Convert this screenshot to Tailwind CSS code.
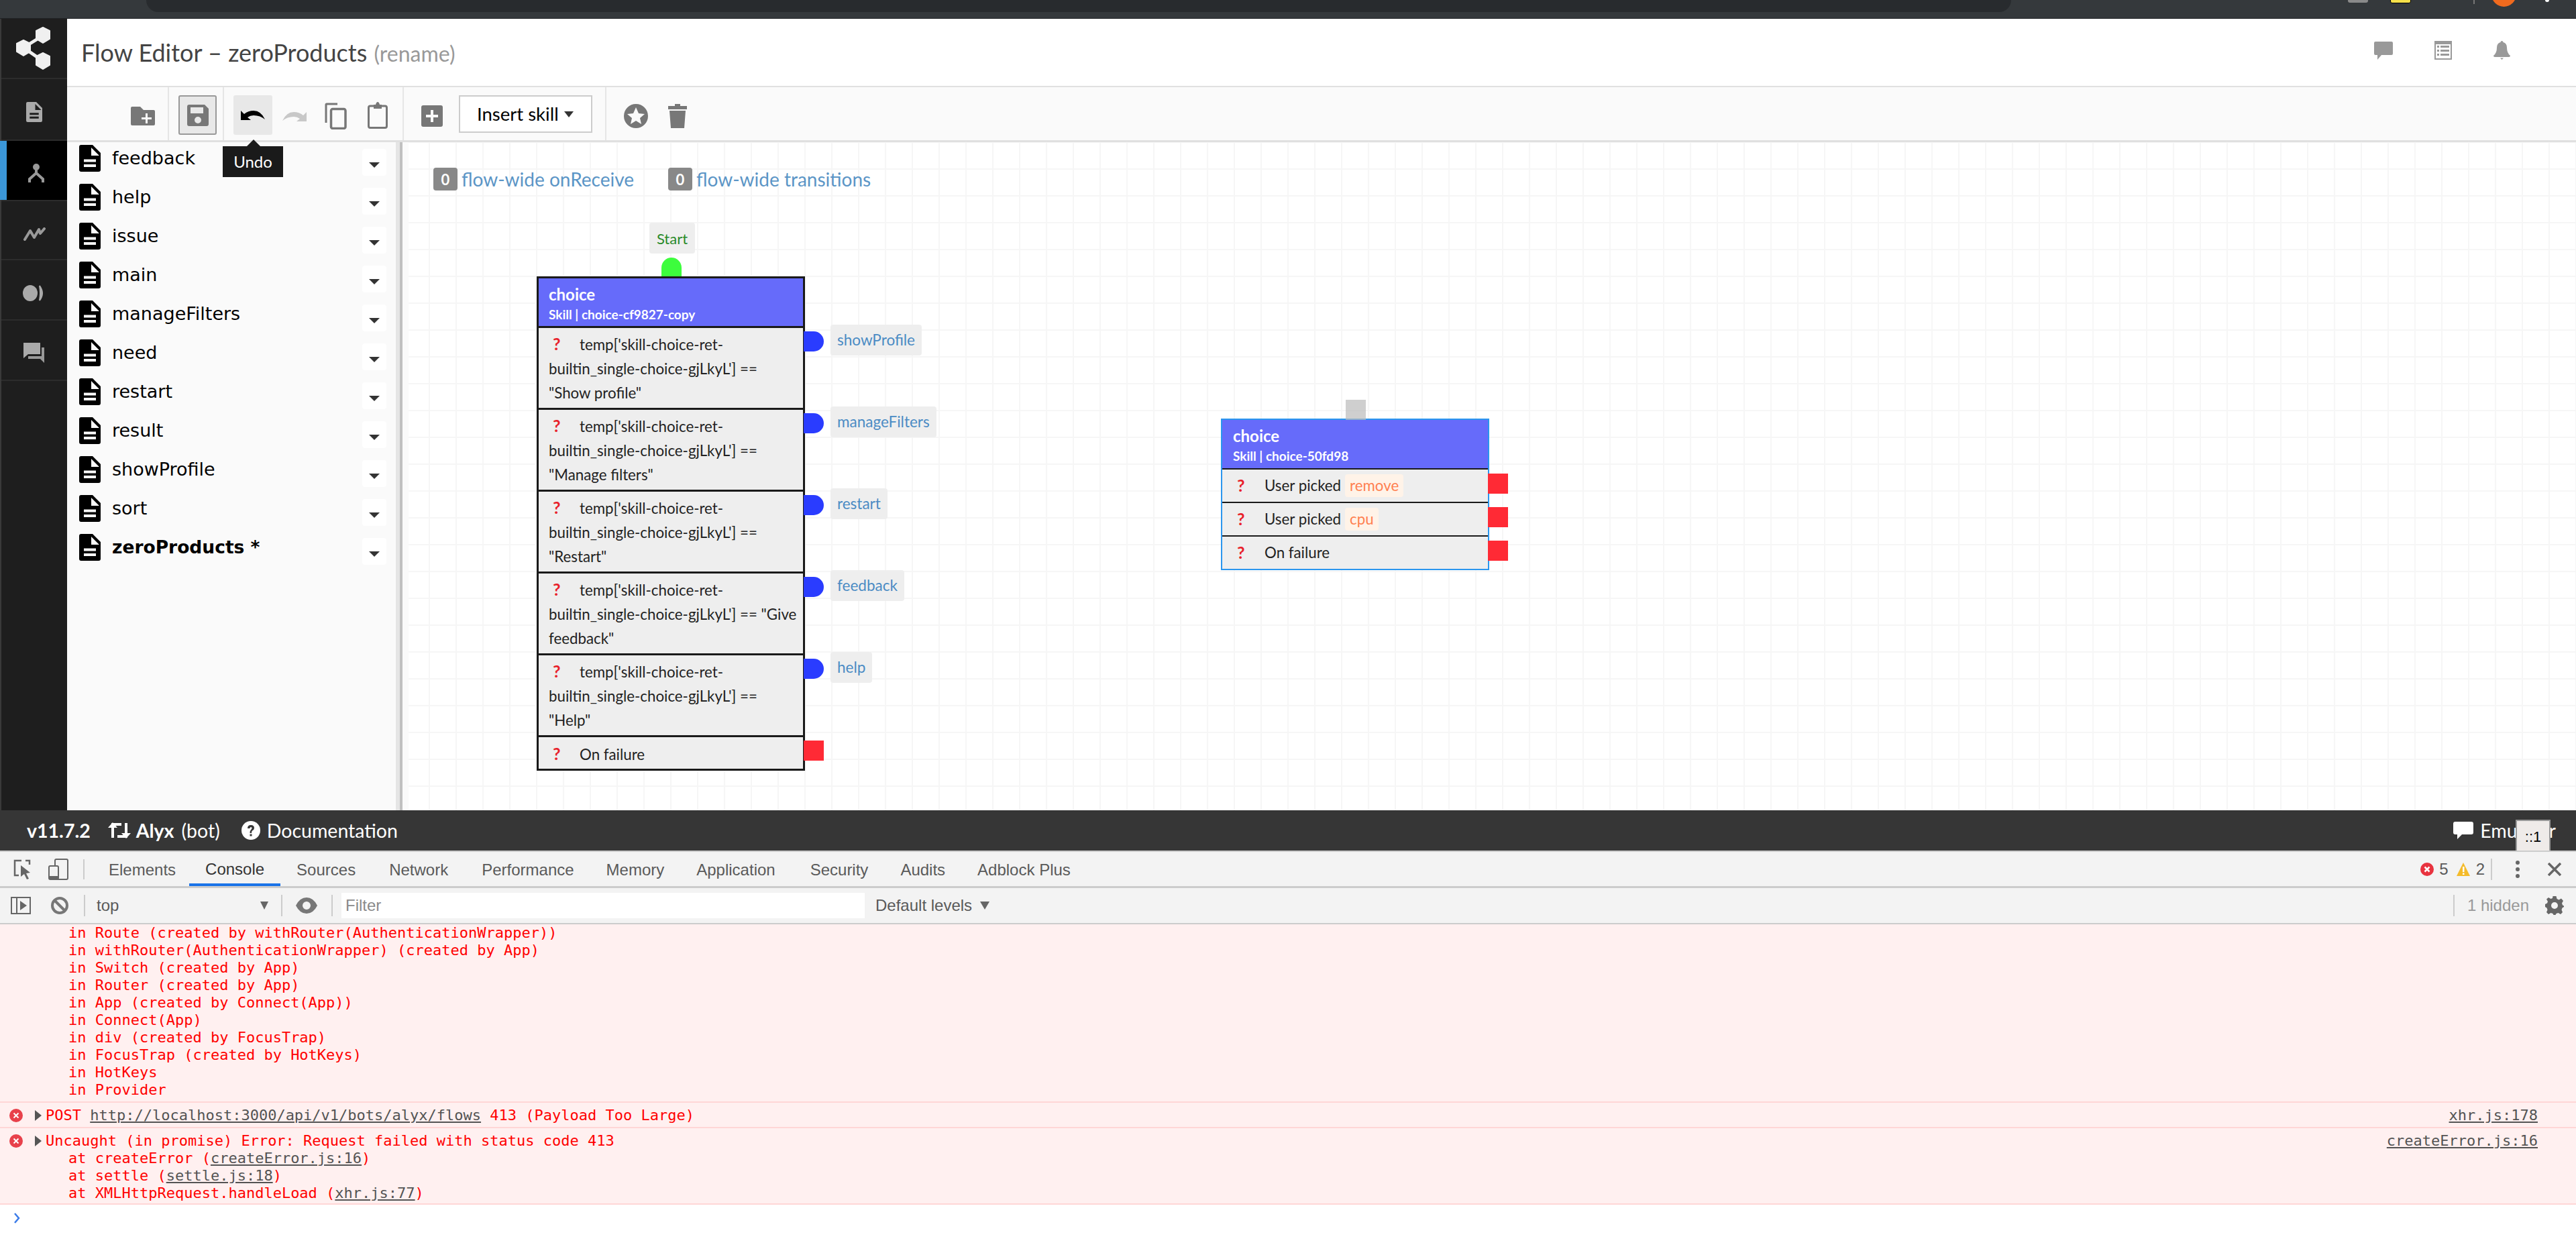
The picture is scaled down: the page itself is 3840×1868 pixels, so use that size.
<!DOCTYPE html>
<html lang="en">
<head>
    <meta charset="UTF-8">
    <title>Flow Editor - zeroProducts</title>
    <script src="https://cdn.jsdelivr.net/npm/@tailwindcss/browser@4"></script>
</head>
<body class="w-[3840px] h-[1868px] overflow-hidden bg-white font-['Lato',sans-serif] relative">
    <!-- Browser chrome, cut off by the capture -->
    <div class="h-[28px] bg-[#35393c] border-b border-[#202225] relative overflow-hidden">
        <div class="absolute left-[218px] top-[-20px] w-[2780px] h-[38px] bg-[#282b2e] rounded-[18px]"></div>
        <div class="absolute left-[3500px] top-[-8px] w-[30px] h-[12px] bg-[#8a8a8a] rounded-[3px]"></div>
        <div class="absolute left-[3563px] top-[-8px] w-[31px] h-[13px] bg-[#f5e04a] border border-black rounded-[3px]"></div>
        <div class="absolute left-[3687px] top-0 w-[2px] h-[6px] bg-[#777]"></div>
        <div class="absolute left-[3714px] top-[-27px] w-[37px] h-[37px] bg-[#f06a1e] rounded-full"></div>
        <div class="absolute left-[3794px] top-[-3px] w-[6px] h-[6px] bg-white rounded-full"></div>
    </div>

    <div class="flex h-[1180px]">
        <!-- Left nav -->
        <div class="w-[100px] shrink-0 bg-[#1e1e1e] border-l-[2px] border-[#3a3a3a] flex flex-col">
            <div class="h-[90px] border-b-[2px] border-[#2c2c2c] flex items-center justify-center">
                <svg width="60" height="66" viewBox="0 0 60 66" class="-ml-[2px]">
                    <g fill="#f0f0f0" stroke="#f0f0f0" stroke-linejoin="round" stroke-width="2">
                        <polygon points="44,2 54,7 54,19 44,25 34,19 34,7"/>
                        <polygon points="15,21 25,26 25,38 15,44 5,38 5,26"/>
                        <polygon points="44,40 54,45 54,58 44,64 34,58 34,45"/>
                    </g>
                    <path d="M15 32 L44 14 M15 32 L44 52" stroke="#f0f0f0" stroke-width="5"/>
                </svg>
            </div>
            <div class="h-[92px] border-b-[2px] border-[#2c2c2c] flex items-center justify-center pt-[8px]">
                <svg width="24" height="30" viewBox="0 0 32 40"><path fill="#aaa" fill-rule="evenodd" d="M3 0H20L32 12V37Q32 40 29 40H3Q0 40 0 37V3Q0 0 3 0ZM18 4V16H30ZM7 21.5V25.5H25V21.5ZM7 29V33H25V29Z"/></svg>
            </div>
            <div class="h-[88px] -ml-[2px] bg-black border-l-[10px] border-[#3b97d9] flex items-center justify-center pt-[8px]">
                <svg width="28" height="28" viewBox="0 0 28 28" class="-ml-[2px]">
                    <circle cx="14" cy="5" r="5" fill="#999"/>
                    <path d="M14 8 V14 M14 14 L4 23 V28 M14 14 L24 23 V28" stroke="#999" stroke-width="4" fill="none"/>
                </svg>
            </div>
            <div class="h-[90px] border-y-[2px] border-[#2c2c2c] flex items-center justify-center pt-[12px]">
                <svg width="34" height="20" viewBox="0 0 34 20"><path d="M3 18 L11 5 L17 15 L24 3 L26 9 L32 2" stroke="#999" stroke-width="4" fill="none" stroke-linecap="round" stroke-linejoin="round"/></svg>
            </div>
            <div class="h-[90px] border-b-[2px] border-[#2c2c2c] flex items-center justify-center pt-[10px]">
                <svg width="34" height="24" viewBox="0 0 34 24"><ellipse cx="11" cy="12" rx="11" ry="12" fill="#aaa"/><path d="M25 1 Q33 12 25 23 Q27 12 25 1Z" fill="#aaa" stroke="#aaa" stroke-width="2"/></svg>
            </div>
            <div class="h-[90px] border-b-[2px] border-[#2c2c2c] flex items-center justify-center pt-[8px]">
                <svg width="32" height="30" viewBox="0 0 32 30"><path fill="#aaa" d="M0 0H25V17H7L0 23Z"/><path fill="#999" d="M27 7H31V30L25 24H7V20H27Z"/></svg>
            </div>
        </div>

        <!-- Editor column -->
        <div class="flex-1 flex flex-col min-w-0">
            <div class="h-[102px] bg-white border-b-[2px] border-[#e0e0e0] flex items-center pl-[21px] pr-[98px] shrink-0">
                <h1 class="text-[36px] text-[#444] font-normal whitespace-nowrap">Flow Editor – zeroProducts <span class="text-[32px] text-[#999] ml-[1px]">(rename)</span></h1>
                <div class="ml-auto flex items-center gap-[62px] -mt-[6px]">
                    <svg width="28" height="27" viewBox="0 0 28 27"><path fill="#999" d="M2 0H26Q28 0 28 2V18Q28 20 26 20H11L5 27V20H2Q0 20 0 18V2Q0 0 2 0Z"/></svg>
                    <svg width="26" height="28" viewBox="0 0 26 28"><path fill="#999" fill-rule="evenodd" d="M0 0H26V28H0ZM2 5V26H24V5Z"/><path fill="#999" d="M4 7H7V10H4ZM9 7H22V10H9ZM4 13H7V16H4ZM9 13H22V16H9ZM4 19H7V22H4ZM9 19H22V22H9Z"/></svg>
                    <svg width="25" height="28" viewBox="0 0 25 28"><path fill="#999" d="M12.5 0Q14.5 0 14.5 2Q20 3.500 20 10Q20 18 25 22Q25 24 22 24H3Q0 24 0 22Q5 18 5 10Q5 3.500 10.500 2Q10.500 0 12.500 0ZM10 25.500H15L12.500 28Z"/></svg>
                </div>
            </div>

            <!-- Toolbar -->
            <div class="h-[82px] bg-[#fafafa] border-b-[3px] border-[#e0e0e0] flex shrink-0">
                <div class="w-[152px] border-r-[2px] border-[#e6e6e6] flex items-end pl-[95px] pb-[22px]">
                    <svg width="36" height="28" viewBox="0 0 36 28"><path fill="#777" fill-rule="evenodd" d="M2 0H14L19 5H34Q36 5 36 7V26Q36 28 34 28H2Q0 28 0 26V2Q0 0 2 0ZM22 10V16H16V19H22V25H25V19H31V16H25V10Z"/></svg>
                </div>
                <div class="w-[82px] border-r-[2px] border-[#e6e6e6] flex items-start pl-[14px] pt-[12px]">
                    <div class="w-[57px] h-[59px] bg-[#e8e8e8] border-[2px] border-[#999] rounded-[3px] flex items-center justify-center">
                        <svg width="32" height="32" viewBox="0 0 32 32"><path fill="#777" fill-rule="evenodd" d="M3 0H26L32 6V29Q32 32 29 32H3Q0 32 0 29V3Q0 0 3 0ZM5 4V13H24V4ZM16 18A5 5 0 1 0 16 28A5 5 0 1 0 16 18Z"/></svg>
                    </div>
                </div>
                <div class="w-[268px] border-r-[2px] border-[#e6e6e6] flex items-start pl-[14px] pt-[12px]">
                    <div class="w-[58px] h-[59px] bg-[#e8e8e8] rounded-[3px] flex items-center justify-center">
                        <svg width="36" height="17" viewBox="0 0 36 17"><path d="M0 16V2L5 7Q11 2 19 2Q30 2 36 15Q29 9 19 9Q14 9 10 12L15 16Z" fill="#000"/></svg>
                    </div>
                    <svg width="36" height="17" viewBox="0 0 36 17" class="ml-[15px] mt-[23px]"><path d="M36 16V2L31 7Q25 2 17 2Q6 2 0 15Q7 9 17 9Q22 9 26 12L21 16Z" fill="#c8c8c8"/></svg>
                    <svg width="33" height="40" viewBox="0 0 33 40" class="ml-[27px] mt-[11px]"><path d="M19 2H3Q2 2 2 3V30" stroke="#777" stroke-width="3" fill="none"/><rect x="9.500" y="9.500" width="21.500" height="29" rx="2.500" stroke="#777" stroke-width="3.500" fill="none"/></svg>
                    <svg width="30" height="40" viewBox="0 0 30 40" class="ml-[31px] mt-[10px]"><rect x="1.500" y="6" width="27" height="32.500" rx="2.500" stroke="#777" stroke-width="3" fill="none"/><path fill="#777" d="M9 4H12Q13 0 15 0Q17 0 18 4H21V10H9Z"/></svg>
                </div>
                <div class="w-[302px] border-r-[2px] border-[#e6e6e6] flex items-start pl-[26px] pt-[12px]">
                    <svg width="32" height="32" viewBox="0 0 32 32" class="mt-[15px]"><path fill="#777" fill-rule="evenodd" d="M3 0H29Q32 0 32 3V29Q32 32 29 32H3Q0 32 0 29V3Q0 0 3 0ZM14 7V14H7V18H14V25H18V18H25V14H18V7Z"/></svg>
                    <button class="ml-[24px] w-[199px] h-[56px] bg-white border-[2px] border-[#ccc] text-[27.5px] text-black flex items-center pl-[25px] whitespace-nowrap">
                        Insert skill
                        <span class="ml-[8px] mt-[1px] border-x-[7.500px] border-x-transparent border-t-[9px] border-t-[#333]"></span>
                    </button>
                </div>
                <div class="flex items-start pl-[26px] pt-[25px]">
                    <svg width="36" height="36" viewBox="0 0 36 36"><path fill="#777" fill-rule="evenodd" d="M18 0A18 18 0 1 0 18 36A18 18 0 1 0 18 0ZM18 5L22 14L31 15L24 21L26 30L18 25L10 30L12 21L5 15L14 14Z"/></svg>
                    <svg width="28" height="36" viewBox="0 0 28 36" class="ml-[30px]"><path fill="#777" d="M10 0H18V3H28V8H0V3H10ZM2 10H26L24 36H4Z"/></svg>
                </div>
            </div>

            <div class="flex flex-1 min-h-0 relative">
                <!-- Flow list -->
                <div class="w-[490px] shrink-0 bg-[#fafafa] pl-[18px] pr-[14px] pt-[4px]">
                    <div class="h-[58px] flex items-start relative"><svg width="32" height="40" viewBox="0 0 32 40"><path fill="#000" fill-rule="evenodd" d="M3 0H20L32 12V37Q32 40 29 40H3Q0 40 0 37V3Q0 0 3 0ZM18 4V16H30ZM7 21.500V25.500H25V21.500ZM7 29V33H25V29Z"/></svg><span class="ml-[17px] font-['DejaVu_Sans',sans-serif] text-[27px] leading-[40px] text-black">feedback</span><span class="ml-auto mt-[6px] w-[36px] h-[40px] bg-white rounded-[4px] flex items-center justify-center pt-[8px]"><span class="border-x-[8px] border-x-transparent border-t-[8px] border-t-[#333]"></span></span></div>
                    <div class="h-[58px] flex items-start relative"><svg width="32" height="40" viewBox="0 0 32 40"><path fill="#000" fill-rule="evenodd" d="M3 0H20L32 12V37Q32 40 29 40H3Q0 40 0 37V3Q0 0 3 0ZM18 4V16H30ZM7 21.500V25.500H25V21.500ZM7 29V33H25V29Z"/></svg><span class="ml-[17px] font-['DejaVu_Sans',sans-serif] text-[27px] leading-[40px] text-black">help</span><span class="ml-auto mt-[6px] w-[36px] h-[40px] bg-white rounded-[4px] flex items-center justify-center pt-[8px]"><span class="border-x-[8px] border-x-transparent border-t-[8px] border-t-[#333]"></span></span></div>
                    <div class="h-[58px] flex items-start relative"><svg width="32" height="40" viewBox="0 0 32 40"><path fill="#000" fill-rule="evenodd" d="M3 0H20L32 12V37Q32 40 29 40H3Q0 40 0 37V3Q0 0 3 0ZM18 4V16H30ZM7 21.500V25.500H25V21.500ZM7 29V33H25V29Z"/></svg><span class="ml-[17px] font-['DejaVu_Sans',sans-serif] text-[27px] leading-[40px] text-black">issue</span><span class="ml-auto mt-[6px] w-[36px] h-[40px] bg-white rounded-[4px] flex items-center justify-center pt-[8px]"><span class="border-x-[8px] border-x-transparent border-t-[8px] border-t-[#333]"></span></span></div>
                    <div class="h-[58px] flex items-start relative"><svg width="32" height="40" viewBox="0 0 32 40"><path fill="#000" fill-rule="evenodd" d="M3 0H20L32 12V37Q32 40 29 40H3Q0 40 0 37V3Q0 0 3 0ZM18 4V16H30ZM7 21.500V25.500H25V21.500ZM7 29V33H25V29Z"/></svg><span class="ml-[17px] font-['DejaVu_Sans',sans-serif] text-[27px] leading-[40px] text-black">main</span><span class="ml-auto mt-[6px] w-[36px] h-[40px] bg-white rounded-[4px] flex items-center justify-center pt-[8px]"><span class="border-x-[8px] border-x-transparent border-t-[8px] border-t-[#333]"></span></span></div>
                    <div class="h-[58px] flex items-start relative"><svg width="32" height="40" viewBox="0 0 32 40"><path fill="#000" fill-rule="evenodd" d="M3 0H20L32 12V37Q32 40 29 40H3Q0 40 0 37V3Q0 0 3 0ZM18 4V16H30ZM7 21.500V25.500H25V21.500ZM7 29V33H25V29Z"/></svg><span class="ml-[17px] font-['DejaVu_Sans',sans-serif] text-[27px] leading-[40px] text-black">manageFilters</span><span class="ml-auto mt-[6px] w-[36px] h-[40px] bg-white rounded-[4px] flex items-center justify-center pt-[8px]"><span class="border-x-[8px] border-x-transparent border-t-[8px] border-t-[#333]"></span></span></div>
                    <div class="h-[58px] flex items-start relative"><svg width="32" height="40" viewBox="0 0 32 40"><path fill="#000" fill-rule="evenodd" d="M3 0H20L32 12V37Q32 40 29 40H3Q0 40 0 37V3Q0 0 3 0ZM18 4V16H30ZM7 21.500V25.500H25V21.500ZM7 29V33H25V29Z"/></svg><span class="ml-[17px] font-['DejaVu_Sans',sans-serif] text-[27px] leading-[40px] text-black">need</span><span class="ml-auto mt-[6px] w-[36px] h-[40px] bg-white rounded-[4px] flex items-center justify-center pt-[8px]"><span class="border-x-[8px] border-x-transparent border-t-[8px] border-t-[#333]"></span></span></div>
                    <div class="h-[58px] flex items-start relative"><svg width="32" height="40" viewBox="0 0 32 40"><path fill="#000" fill-rule="evenodd" d="M3 0H20L32 12V37Q32 40 29 40H3Q0 40 0 37V3Q0 0 3 0ZM18 4V16H30ZM7 21.500V25.500H25V21.500ZM7 29V33H25V29Z"/></svg><span class="ml-[17px] font-['DejaVu_Sans',sans-serif] text-[27px] leading-[40px] text-black">restart</span><span class="ml-auto mt-[6px] w-[36px] h-[40px] bg-white rounded-[4px] flex items-center justify-center pt-[8px]"><span class="border-x-[8px] border-x-transparent border-t-[8px] border-t-[#333]"></span></span></div>
                    <div class="h-[58px] flex items-start relative"><svg width="32" height="40" viewBox="0 0 32 40"><path fill="#000" fill-rule="evenodd" d="M3 0H20L32 12V37Q32 40 29 40H3Q0 40 0 37V3Q0 0 3 0ZM18 4V16H30ZM7 21.500V25.500H25V21.500ZM7 29V33H25V29Z"/></svg><span class="ml-[17px] font-['DejaVu_Sans',sans-serif] text-[27px] leading-[40px] text-black">result</span><span class="ml-auto mt-[6px] w-[36px] h-[40px] bg-white rounded-[4px] flex items-center justify-center pt-[8px]"><span class="border-x-[8px] border-x-transparent border-t-[8px] border-t-[#333]"></span></span></div>
                    <div class="h-[58px] flex items-start relative"><svg width="32" height="40" viewBox="0 0 32 40"><path fill="#000" fill-rule="evenodd" d="M3 0H20L32 12V37Q32 40 29 40H3Q0 40 0 37V3Q0 0 3 0ZM18 4V16H30ZM7 21.500V25.500H25V21.500ZM7 29V33H25V29Z"/></svg><span class="ml-[17px] font-['DejaVu_Sans',sans-serif] text-[27px] leading-[40px] text-black">showProfile</span><span class="ml-auto mt-[6px] w-[36px] h-[40px] bg-white rounded-[4px] flex items-center justify-center pt-[8px]"><span class="border-x-[8px] border-x-transparent border-t-[8px] border-t-[#333]"></span></span></div>
                    <div class="h-[58px] flex items-start relative"><svg width="32" height="40" viewBox="0 0 32 40"><path fill="#000" fill-rule="evenodd" d="M3 0H20L32 12V37Q32 40 29 40H3Q0 40 0 37V3Q0 0 3 0ZM18 4V16H30ZM7 21.500V25.500H25V21.500ZM7 29V33H25V29Z"/></svg><span class="ml-[17px] font-['DejaVu_Sans',sans-serif] text-[27px] leading-[40px] text-black">sort</span><span class="ml-auto mt-[6px] w-[36px] h-[40px] bg-white rounded-[4px] flex items-center justify-center pt-[8px]"><span class="border-x-[8px] border-x-transparent border-t-[8px] border-t-[#333]"></span></span></div>
                    <div class="h-[58px] flex items-start relative"><svg width="32" height="40" viewBox="0 0 32 40"><path fill="#000" fill-rule="evenodd" d="M3 0H20L32 12V37Q32 40 29 40H3Q0 40 0 37V3Q0 0 3 0ZM18 4V16H30ZM7 21.500V25.500H25V21.500ZM7 29V33H25V29Z"/></svg><span class="ml-[17px] font-['DejaVu_Sans',sans-serif] font-bold text-[26.5px] leading-[40px] text-black">zeroProducts *</span><span class="ml-auto mt-[6px] w-[36px] h-[40px] bg-white rounded-[4px] flex items-center justify-center pt-[8px]"><span class="border-x-[8px] border-x-transparent border-t-[8px] border-t-[#333]"></span></span></div>
                </div>
                <!-- Splitter -->
                <div class="w-[6px] shrink-0 bg-[#e5e5e5]"></div>
                <div class="w-[4px] shrink-0 bg-[#c0c0c0]"></div>
                <div class="w-[9px] shrink-0 bg-[#fafafa]"></div>

                <!-- Canvas: node positions are the content here -->
                <div class="flex-1 relative bg-white overflow-hidden bg-[linear-gradient(#f6f6f6_2px,transparent_2px),linear-gradient(90deg,#f6f6f6_2px,transparent_2px)] bg-[size:40px_40px] bg-[position:30px_39px]">
                    <div class="absolute left-[37px] top-[34px] flex items-center text-[28px] text-[#5b95c6] whitespace-nowrap">
                        <span class="w-[36px] h-[34px] bg-[#888] rounded-[4px] text-white text-[22px] font-bold flex items-center justify-center mr-[6px]">0</span>flow-wide onReceive
                    </div>
                    <div class="absolute left-[387px] top-[34px] flex items-center text-[28px] text-[#5b95c6] whitespace-nowrap">
                        <span class="w-[36px] h-[34px] bg-[#888] rounded-[4px] text-white text-[22px] font-bold flex items-center justify-center mr-[6px]">0</span>flow-wide transitions
                    </div>

                    <div class="absolute left-[359px] top-[120px] w-[68px] h-[46px] bg-[#eeeeee] rounded-[4px] text-[22px] text-[#2a8a2a] flex items-center justify-center">Start</div>
                    <div class="absolute left-[377px] top-[172px] w-[30px] h-[30px] bg-[#3dfd3d] rounded-t-[15px]"></div>

                    <!-- choice-cf9827-copy -->
                    <div class="absolute left-[191px] top-[200px] w-[400px] border-[3px] border-[#1a1a1a] text-[22.3px] text-[#222]">
                        <div class="h-[74px] bg-[#666bfa] text-white font-bold px-[15px] pt-[7px] border-b-[3px] border-[#1a1a1a]">
                            <div class="text-[24px] leading-[34px]">choice</div>
                            <div class="text-[19px] leading-[26px]">Skill | choice-cf9827-copy</div>
                        </div>
                        <div class="h-[122px] bg-[#eeeeee] border-b-[3px] border-[#1a1a1a] pl-[15px] pr-[8px] pt-[5px] leading-[36px]"><span class="inline-block w-[46px] pl-[6px] text-[#e8202a] font-bold text-[25px]">?</span>temp['skill-choice-ret-builtin_single-choice-gjLkyL'] == "Show profile"</div>
                        <div class="h-[122px] bg-[#eeeeee] border-b-[3px] border-[#1a1a1a] pl-[15px] pr-[8px] pt-[5px] leading-[36px]"><span class="inline-block w-[46px] pl-[6px] text-[#e8202a] font-bold text-[25px]">?</span>temp['skill-choice-ret-builtin_single-choice-gjLkyL'] == "Manage filters"</div>
                        <div class="h-[122px] bg-[#eeeeee] border-b-[3px] border-[#1a1a1a] pl-[15px] pr-[8px] pt-[5px] leading-[36px]"><span class="inline-block w-[46px] pl-[6px] text-[#e8202a] font-bold text-[25px]">?</span>temp['skill-choice-ret-builtin_single-choice-gjLkyL'] == "Restart"</div>
                        <div class="h-[122px] bg-[#eeeeee] border-b-[3px] border-[#1a1a1a] pl-[15px] pr-[8px] pt-[5px] leading-[36px]"><span class="inline-block w-[46px] pl-[6px] text-[#e8202a] font-bold text-[25px]">?</span>temp['skill-choice-ret-builtin_single-choice-gjLkyL'] == "Give feedback"</div>
                        <div class="h-[122px] bg-[#eeeeee] border-b-[3px] border-[#1a1a1a] pl-[15px] pr-[8px] pt-[5px] leading-[36px]"><span class="inline-block w-[46px] pl-[6px] text-[#e8202a] font-bold text-[25px]">?</span>temp['skill-choice-ret-builtin_single-choice-gjLkyL'] == "Help"</div>
                        <div class="h-[47px] bg-[#eeeeee] pl-[15px] pt-[6px] leading-[36px]"><span class="inline-block w-[46px] pl-[6px] text-[#e8202a] font-bold text-[25px]">?</span>On failure</div>
                    </div>
                    <div class="absolute left-[589px] top-[282px] w-[30px] h-[30px] bg-[#2a3cff] rounded-r-[15px]"></div>
                    <div class="absolute left-[589px] top-[404px] w-[30px] h-[30px] bg-[#2a3cff] rounded-r-[15px]"></div>
                    <div class="absolute left-[589px] top-[526px] w-[30px] h-[30px] bg-[#2a3cff] rounded-r-[15px]"></div>
                    <div class="absolute left-[589px] top-[648px] w-[30px] h-[30px] bg-[#2a3cff] rounded-r-[15px]"></div>
                    <div class="absolute left-[589px] top-[770px] w-[30px] h-[30px] bg-[#2a3cff] rounded-r-[15px]"></div>
                    <div class="absolute left-[589px] top-[892px] w-[30px] h-[30px] bg-[#ff2a35]"></div>
                    <div class="absolute left-[629px] top-[272px] h-[46px] px-[10px] bg-[#eeeeee] rounded-[4px] text-[22.5px] text-[#4a8bc4] flex items-center">showProfile</div>
                    <div class="absolute left-[629px] top-[394px] h-[46px] px-[10px] bg-[#eeeeee] rounded-[4px] text-[22.5px] text-[#4a8bc4] flex items-center">manageFilters</div>
                    <div class="absolute left-[629px] top-[516px] h-[46px] px-[10px] bg-[#eeeeee] rounded-[4px] text-[22.5px] text-[#4a8bc4] flex items-center">restart</div>
                    <div class="absolute left-[629px] top-[638px] h-[46px] px-[10px] bg-[#eeeeee] rounded-[4px] text-[22.5px] text-[#4a8bc4] flex items-center">feedback</div>
                    <div class="absolute left-[629px] top-[760px] h-[46px] px-[10px] bg-[#eeeeee] rounded-[4px] text-[22.5px] text-[#4a8bc4] flex items-center">help</div>

                    <!-- choice-50fd98 -->
                    <div class="absolute left-[1211px] top-[412px] w-[400px] border-[2px] border-[#2a96ee] text-[22.3px] text-[#222]">
                        <div class="h-[74px] bg-[#666bfa] text-white font-bold px-[16px] pt-[7px] border-b-[2px] border-[#1a1a1a]">
                            <div class="text-[24px] leading-[34px]">choice</div>
                            <div class="text-[19px] leading-[26px]">Skill | choice-50fd98</div>
                        </div>
                        <div class="h-[50px] bg-[#eeeeee] border-b-[2px] border-[#1a1a1a] pl-[16px] flex items-center"><span class="w-[47px] pl-[6px] text-[#e8202a] font-bold text-[25px]">?</span>User picked<span class="ml-[6px] px-[7px] h-[34px] bg-[#fff3e8] rounded-[4px] text-[#ff8050] flex items-center">remove</span></div>
                        <div class="h-[50px] bg-[#eeeeee] border-b-[2px] border-[#1a1a1a] pl-[16px] flex items-center"><span class="w-[47px] pl-[6px] text-[#e8202a] font-bold text-[25px]">?</span>User picked<span class="ml-[6px] px-[7px] h-[34px] bg-[#fff3e8] rounded-[4px] text-[#ff8050] flex items-center">cpu</span></div>
                        <div class="h-[48px] bg-[#eeeeee] pl-[16px] flex items-center"><span class="w-[47px] pl-[6px] text-[#e8202a] font-bold text-[25px]">?</span>On failure</div>
                    </div>
                    <div class="absolute left-[1397px] top-[384px] w-[30px] h-[30px] bg-[#bbb]/70"></div>
                    <div class="absolute left-[1609px] top-[494px] w-[30px] h-[30px] bg-[#ff2a35]"></div>
                    <div class="absolute left-[1609px] top-[544px] w-[30px] h-[30px] bg-[#ff2a35]"></div>
                    <div class="absolute left-[1609px] top-[594px] w-[30px] h-[30px] bg-[#ff2a35]"></div>
                </div>

                <!-- Undo tooltip -->
                <div class="absolute left-[232px] top-[6px] w-[90px] h-[46px] bg-[#1a1a1a] text-white text-[24px] flex items-center justify-center">
                    Undo
                    <span class="absolute left-[36px] -top-[10px] border-x-[10px] border-x-transparent border-b-[10px] border-b-[#1a1a1a]"></span>
                </div>
            </div>
        </div>
    </div>

    <!-- App footer -->
    <div class="h-[60px] bg-[#363636] text-white text-[28.5px] flex items-center pl-[40px] pr-[30px] relative">
        <span class="font-bold">v11.7.2</span>
        <svg width="34" height="26" viewBox="0 0 34 26" class="ml-[26px]"><path d="M7 24V4H20M27 2V22H14" stroke="#fff" stroke-width="4" fill="none"/><path d="M0 9L7 1L14 9ZM20 17L27 25L34 17Z" fill="#fff"/></svg>
        <span class="ml-[8px] font-bold">Alyx</span>
        <span class="ml-[11px]">(bot)</span>
        <svg width="28" height="28" viewBox="0 0 28 28" class="ml-[32px]"><circle cx="14" cy="14" r="14" fill="#fff"/><path d="M9 11Q9 6 14 6Q19 6 19 10.500Q19 13 16 14.500Q15 15 15 18H12.500Q12.500 14 14.500 12.500Q15.500 11.500 15.500 10.500Q15.500 9 14 9Q12.500 9 12.500 11Z" fill="#363636"/><rect x="12.500" y="19.500" width="3" height="3" fill="#363636"/></svg>
        <span class="ml-[10px]">Documentation</span>
        <svg width="30" height="26" viewBox="0 0 30 26" class="ml-auto"><path fill="#fff" d="M3 0H27Q30 0 30 3V16Q30 19 27 19H13L6 26V19H3Q0 19 0 16V3Q0 0 3 0Z"/></svg>
        <span class="ml-[10px]">Emulator</span>
        <div class="absolute left-[3750px] top-[14px] w-[52px] h-[46px] bg-[#efebe9] border-x-[2px] border-t-[2px] border-[#999] text-black text-[22px] font-['Liberation_Sans',sans-serif] flex items-center justify-center pt-[2px]">::1</div>
    </div>

    <!-- Devtools -->
    <div class="h-[56px] bg-[#f3f3f3] border-t-[2px] border-b-[3px] border-[#ccc] flex items-center font-['Liberation_Sans',sans-serif] text-[24px] text-[#5a5a5a] relative">
        <svg width="26" height="30" viewBox="0 0 26 30" class="ml-[20px]"><path d="M12 2H2V24H8M18 2H24V8" stroke="#666" stroke-width="2.500" fill="none"/><path fill="#666" d="M11 9L25 20L19 21L23 29L20 30L16 22L11 26Z"/></svg>
        <svg width="30" height="32" viewBox="0 0 30 32" class="ml-[26px]"><rect x="10" y="1" width="19" height="30" rx="2" stroke="#666" stroke-width="2" fill="none"/><rect x="1" y="11" width="14" height="20" rx="2" stroke="#666" stroke-width="2" fill="#f3f3f3"/><rect x="2" y="26" width="12" height="4" fill="#666"/></svg>
        <span class="ml-[22px] w-[2px] h-[30px] bg-[#ccc]"></span>
        <div class="flex h-full ml-[12px]">
            <span class="pl-[24px] pr-[20px] pt-[3px] flex items-center">Elements</span>
            <span class="px-[24px] flex items-center text-[#333] border-b-[4px] border-[#1a73e8] pt-[5px]">Console</span>
            <span class="pl-[24px] pr-[26px] pt-[3px] flex items-center">Sources</span>
            <span class="pl-[24px] pr-[26px] pt-[3px] flex items-center">Network</span>
            <span class="px-[24px] pt-[3px] flex items-center">Performance</span>
            <span class="px-[24px] pt-[3px] flex items-center">Memory</span>
            <span class="pl-[24px] pr-[28px] pt-[3px] flex items-center">Application</span>
            <span class="px-[24px] pt-[3px] flex items-center">Security</span>
            <span class="px-[24px] pt-[3px] flex items-center">Audits</span>
            <span class="px-[24px] pt-[3px] flex items-center">Adblock Plus</span>
        </div>
        <div class="ml-auto flex items-center">
            <svg width="20" height="20" viewBox="0 0 20 20"><circle cx="10" cy="10" r="10" fill="#e8333f"/><path d="M6.500 6.500L13.500 13.500M13.500 6.500L6.500 13.500" stroke="#fff" stroke-width="2.500"/></svg>
            <span class="ml-[8px]">5</span>
            <svg width="20" height="20" viewBox="0 0 20 20" class="ml-[12px]"><path d="M10 0L20 20H0Z" fill="#f4bb2b"/><rect x="9" y="6" width="2.500" height="8" fill="#fff"/><rect x="9" y="15.500" width="2.500" height="2.500" fill="#fff"/></svg>
            <span class="ml-[9px]">2</span>
            <span class="ml-[9px] w-[2px] h-[32px] bg-[#ccc]"></span>
            <svg width="6" height="26" viewBox="0 0 6 26" class="ml-[35px]"><circle cx="3" cy="3" r="3" fill="#666"/><circle cx="3" cy="13" r="3" fill="#666"/><circle cx="3" cy="23" r="3" fill="#666"/></svg>
            <svg width="20" height="20" viewBox="0 0 20 20" class="ml-[42px] mr-[22px]"><path d="M1 1L19 19M19 1L1 19" stroke="#666" stroke-width="3.500"/></svg>
        </div>
    </div>
    <div class="h-[54px] bg-[#f3f3f3] border-b-[2px] border-[#ccc] flex items-center font-['Liberation_Sans',sans-serif] text-[24px] text-[#5a5a5a]">
        <svg width="30" height="26" viewBox="0 0 30 26" class="ml-[16px]"><rect x="1" y="1" width="28" height="24" stroke="#666" stroke-width="2" fill="none"/><path d="M9 1V25" stroke="#666" stroke-width="2"/><path d="M14 6L24 13L14 20Z" fill="#666"/></svg>
        <svg width="26" height="26" viewBox="0 0 26 26" class="ml-[30px]"><circle cx="13" cy="13" r="11" stroke="#777" stroke-width="4" fill="none"/><path d="M5 5L21 21" stroke="#777" stroke-width="4"/></svg>
        <span class="ml-[23px] w-[2px] h-[32px] bg-[#ccc]"></span>
        <span class="ml-[17px] w-[244px]">top</span>
        <span class="border-x-[6px] border-x-transparent border-t-[12px] border-t-[#666]"></span>
        <span class="ml-[19px] w-[2px] h-[32px] bg-[#ccc]"></span>
        <svg width="32" height="24" viewBox="0 0 32 24" class="ml-[20px]"><path fill="#777" fill-rule="evenodd" d="M16 0Q26 0 32 12Q26 24 16 24Q6 24 0 12Q6 0 16 0ZM16 6A6 6 0 1 0 16 18A6 6 0 1 0 16 6Z"/></svg>
        <span class="ml-[21px] w-[2px] h-[32px] bg-[#ccc]"></span>
        <div class="ml-[13px] w-[780px] h-[38px] bg-white text-[#8a8a8a] flex items-center pl-[6px]">Filter</div>
        <span class="ml-[16px]">Default levels</span>
        <span class="ml-[12px] border-x-[7px] border-x-transparent border-t-[12px] border-t-[#666]"></span>
        <span class="ml-auto w-[2px] h-[32px] bg-[#ccc]"></span>
        <span class="ml-[19px] text-[#999]">1 hidden</span>
        <svg width="28" height="28" viewBox="0 0 28 28" class="ml-[24px] mr-[18px]"><path fill="#666" fill-rule="evenodd" d="M11.500 0H16.500L17.500 4L20.500 5.500L24 3.500L27 7L25 10.500L26 13.500L28 14.500V16L25.500 17.500L24.500 20.500L26 24L23 27L19.500 25L16.500 26L15.500 28H12.500L11.500 26L8.500 25L5 27L2 24L3.500 20.500L2.500 17.500L0 16V12L3 10.500L4 8L2 4.500L5 2L8.500 4L11 3ZM14 9A5 5 0 1 0 14 19A5 5 0 1 0 14 9Z"/></svg>
    </div>

    <!-- Console output -->
    <div class="font-['DejaVu_Sans_Mono',monospace] text-[22px] leading-[26px] text-[#ff0000] whitespace-nowrap">
        <div class="bg-[#fff0f0] border-b-[2px] border-[#ffd6d6] pl-[102px] pb-[4px] h-[266px]">
            <div>in Route (created by withRouter(AuthenticationWrapper))</div>
            <div>in withRouter(AuthenticationWrapper) (created by App)</div>
            <div>in Switch (created by App)</div>
            <div>in Router (created by App)</div>
            <div>in App (created by Connect(App))</div>
            <div>in Connect(App)</div>
            <div>in div (created by FocusTrap)</div>
            <div>in FocusTrap (created by HotKeys)</div>
            <div>in HotKeys</div>
            <div>in Provider</div>
        </div>
        <div class="h-[38px] bg-[#fff0f0] border-b-[2px] border-[#ffd6d6] pl-[14px] pr-[57px] pt-[1px] flex items-center">
            <svg width="20" height="20" viewBox="0 0 20 20"><circle cx="10" cy="10" r="10" fill="#e8414b"/><path d="M6.500 6.500L13.500 13.500M13.500 6.500L6.500 13.500" stroke="#fff" stroke-width="2"/></svg>
            <span class="ml-[18px] mr-[6px] border-y-[8px] border-y-transparent border-l-[10px] border-l-[#555]"></span>
            <span>POST <span class="text-[#545454] underline">http://localhost:3000/api/v1/bots/alyx/flows</span> 413 (Payload Too Large)</span>
            <span class="ml-auto text-[#545454] underline">xhr.js:178</span>
        </div>
        <div class="h-[114px] bg-[#fff0f0] border-b-[2px] border-[#ffd6d6] pl-[14px] pr-[57px] pt-[6px]">
            <div class="flex items-center">
                <svg width="20" height="20" viewBox="0 0 20 20"><circle cx="10" cy="10" r="10" fill="#e8414b"/><path d="M6.500 6.500L13.500 13.500M13.500 6.500L6.500 13.500" stroke="#fff" stroke-width="2"/></svg>
                <span class="ml-[18px] mr-[6px] border-y-[8px] border-y-transparent border-l-[10px] border-l-[#555]"></span>
                <span>Uncaught (in promise) Error: Request failed with status code 413</span>
                <span class="ml-auto text-[#545454] underline">createError.js:16</span>
            </div>
            <div class="pl-[88px]">at createError (<span class="text-[#545454] underline">createError.js:16</span>)</div>
            <div class="pl-[88px]">at settle (<span class="text-[#545454] underline">settle.js:18</span>)</div>
            <div class="pl-[88px]">at XMLHttpRequest.handleLoad (<span class="text-[#545454] underline">xhr.js:77</span>)</div>
        </div>
        <div class="pl-[20px] pt-[12px]">
            <svg width="10" height="16" viewBox="0 0 10 16"><path d="M2 1L8 8L2 15" stroke="#3b7be8" stroke-width="2.500" fill="none"/></svg>
        </div>
    </div>
</body>
</html>
